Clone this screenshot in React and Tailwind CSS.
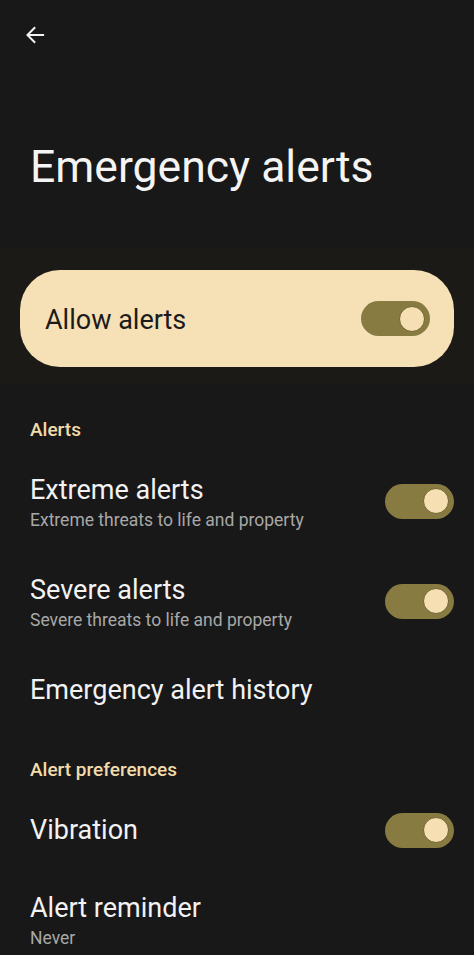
import React from "react";

function Toggle() {
  return (
    <div className="w-[69px] h-[35px] rounded-full bg-[#877b41] flex items-center justify-end pr-[5px] shrink-0">
      <div className="w-[26px] h-[26px] rounded-full bg-[#f6dfb2] border border-[#6f6530]" />
    </div>
  );
}

function Header({ children, pt }) {
  return (
    <div className={`h-[66px] px-[30px] ${pt}`}>
      <div className="text-[19px] leading-[24px] font-medium text-[#f2dbab]">{children}</div>
    </div>
  );
}

export default function App() {
  return (
    <div
      className="w-[474px] h-[955px] overflow-hidden bg-[#181818] text-[#f2f2f2]"
      style={{ fontFamily: "Roboto, 'Noto Sans', sans-serif" }}
    >
      <div className="h-[70px] pl-[22px] pt-[22px]">
        <svg width="26" height="26" viewBox="0 0 24 24" fill="none" stroke="#f2f2f2" strokeWidth="1.8" strokeLinecap="square">
          <path d="M19.5 12H5.5" />
          <path d="M11.5 5.5L5 12l6.5 6.5" />
        </svg>
      </div>
      <div className="h-[178px] pl-[30px] pt-[69px]">
        <h1 className="text-[44.5px] leading-[56px] font-normal text-[#f4f4f4]">Emergency alerts</h1>
      </div>
      <div className="bg-[#1c1a16] pt-[22px] pb-[18px]">
        <div className="mx-[20px] h-[97px] rounded-[40px] bg-[#f6e0b5] flex items-center justify-between pl-[25px] pr-[24px]">
          <span className="text-[27px] leading-[34px] text-[#1b1b1b] pt-[3px]">Allow alerts</span>
          <Toggle />
        </div>
      </div>

      <Header pt="pt-[33px]">Alerts</Header>

      <div className="h-[100px] px-[20px] pl-[30px] flex items-center justify-between">
        <div className="pt-[4px]">
          <div className="text-[27px] leading-[34px]">Extreme alerts</div>
          <div className="text-[17.5px] leading-[26px] text-[#a8a8a8]">Extreme threats to life and property</div>
        </div>
        <Toggle />
      </div>
      <div className="h-[100px] px-[20px] pl-[30px] flex items-center justify-between">
        <div className="pt-[4px]">
          <div className="text-[27px] leading-[34px]">Severe alerts</div>
          <div className="text-[17.5px] leading-[26px] text-[#a8a8a8]">Severe threats to life and property</div>
        </div>
        <Toggle />
      </div>
      <div className="h-[78px] pl-[30px] flex items-center">
        <div className="text-[27px] leading-[34px]">Emergency alert history</div>
      </div>

      <Header pt="pt-[29px]">Alert preferences</Header>

      <div className="h-[70px] px-[20px] pl-[30px] flex items-center justify-between">
        <div className="text-[27px] leading-[34px]">Vibration</div>
        <Toggle />
      </div>
      <div className="pl-[30px] pt-[26px]">
        <div className="text-[27px] leading-[34px]">Alert reminder</div>
        <div className="text-[17.5px] leading-[26px] text-[#a8a8a8]">Never</div>
      </div>
    </div>
  );
}
